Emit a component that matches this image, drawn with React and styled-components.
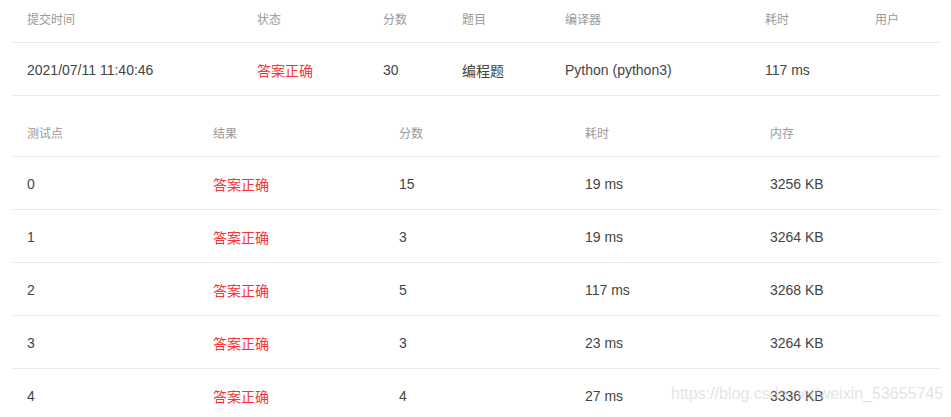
import React from "react";
import styled, { createGlobalStyle } from "styled-components";

const Global = createGlobalStyle`
  html, body { margin: 0; padding: 0; background: #fff; }
  body {
    font-family: "Liberation Sans", "Noto Sans CJK SC", sans-serif;
  }
`;

const Page = styled.div`
  position: relative;
  width: 951px;
  height: 417px;
  overflow: hidden;
  padding: 0 11px 0 12px;
  box-sizing: border-box;
`;

const Row = styled.div`
  display: grid;
  grid-template-columns: ${(p) => p.$cols};
  align-items: center;
  box-sizing: border-box;
  height: ${(p) => p.$h}px;
  padding-top: ${(p) => p.$pt || 0}px;
  padding-bottom: ${(p) => p.$pb || 0}px;
  border-bottom: 1px solid #ebebeb;
`;

const HeadCell = styled.div`
  padding-left: 15px;
  font-size: 12px;
  color: #999;
  white-space: nowrap;
`;

const Cell = styled.div`
  padding-left: 15px;
  font-size: 14px;
  color: ${(p) => (p.$ok ? "#fa3434" : "#444")};
  white-space: nowrap;
`;

const Watermark = styled.div`
  position: absolute;
  left: 671px;
  top: 385px;
  font-family: "Liberation Sans", Arial, sans-serif;
  font-size: 16px;
  color: rgba(200, 200, 200, 0.5);
  white-space: nowrap;
  pointer-events: none;
`;

const COLS1 = "230px 126px 79px 103px 200px 110px 80px";
const COLS2 = "186px 186px 186px 185px 185px";

const cases = [
  ["0", "15", "19 ms", "3256 KB"],
  ["1", "3", "19 ms", "3264 KB"],
  ["2", "5", "117 ms", "3268 KB"],
  ["3", "3", "23 ms", "3264 KB"],
  ["4", "4", "27 ms", "3336 KB"],
];

export default function App() {
  return (
    <>
      <Global />
      <Page>
        <Row $cols={COLS1} $h={43} $pb={6}>
          {["提交时间", "状态", "分数", "题目", "编译器", "耗时", "用户"].map((t) => (
            <HeadCell key={t}>{t}</HeadCell>
          ))}
        </Row>
        <Row $cols={COLS1} $h={53} $pt={1}>
          <Cell>2021/07/11 11:40:46</Cell>
          <Cell $ok>答案正确</Cell>
          <Cell>30</Cell>
          <Cell>编程题</Cell>
          <Cell>Python (python3)</Cell>
          <Cell>117 ms</Cell>
          <Cell></Cell>
        </Row>
        <Row $cols={COLS2} $h={61} $pt={12}>
          {["测试点", "结果", "分数", "耗时", "内存"].map((t) => (
            <HeadCell key={t}>{t}</HeadCell>
          ))}
        </Row>
        {cases.map(([id, score, time, mem]) => (
          <Row key={id} $cols={COLS2} $h={53} $pt={1}>
            <Cell>{id}</Cell>
            <Cell $ok>答案正确</Cell>
            <Cell>{score}</Cell>
            <Cell>{time}</Cell>
            <Cell>{mem}</Cell>
          </Row>
        ))}
        <Watermark>https://blog.csdn.net/weixin_53655745</Watermark>
      </Page>
    </>
  );
}
